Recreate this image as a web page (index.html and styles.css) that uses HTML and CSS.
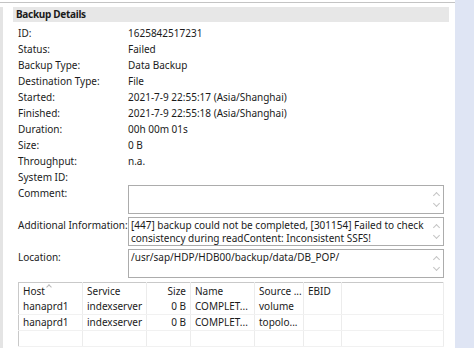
FILE: index.html
```html
<!DOCTYPE html>
<html>
<head>
    <meta name="viewport" content="width=device-width, initial-scale=1">
    <title>Backup Details</title>
    <link rel="stylesheet" href="styles.css">
</head>
<body>

    <div class="main">
        <div class="panel">
            <div class="edge"></div>
            <div class="content">
                <div class="titlebar">Backup Details</div>

                <div class="fields">
                    <div class="label">ID:</div><div class="value">1625842517231</div>
                    <div class="label">Status:</div><div class="value">Failed</div>
                    <div class="label">Backup Type:</div><div class="value">Data Backup</div>
                    <div class="label">Destination Type:</div><div class="value">File</div>
                    <div class="label">Started:</div><div class="value">2021-7-9 22:55:17 (Asia/Shanghai)</div>
                    <div class="label">Finished:</div><div class="value">2021-7-9 22:55:18 (Asia/Shanghai)</div>
                    <div class="label">Duration:</div><div class="value">00h 00m 01s</div>
                    <div class="label">Size:</div><div class="value">0 B</div>
                    <div class="label">Throughput:</div><div class="value">n.a.</div>
                    <div class="label">System ID:</div><div class="value"></div>

                    <div class="label tall">Comment:</div>
                    <div class="box">
                        <div class="boxtext"></div>
                        <div class="scroll"><span class="up"></span><span class="down"></span></div>
                    </div>

                    <div class="label tall">Additional Information:</div>
                    <div class="box">
                        <div class="boxtext">[447] backup could not be completed, [301154] Failed to check consistency during readContent: Inconsistent SSFS!</div>
                        <div class="scroll"><span class="up"></span><span class="down"></span></div>
                    </div>

                    <div class="label tall">Location:</div>
                    <div class="box">
                        <div class="boxtext">/usr/sap/HDP/HDB00/backup/data/DB_POP/</div>
                        <div class="scroll"><span class="up"></span><span class="down"></span></div>
                    </div>
                </div>

                <table class="grid">
                    <tr class="head">
                        <th class="c-host">Host<span class="sort"></span></th>
                        <th class="c-svc">Service</th>
                        <th class="c-size num">Size</th>
                        <th class="c-name">Name</th>
                        <th class="c-src">Source ...</th>
                        <th class="c-ebid">EBID</th>
                        <th></th>
                    </tr>
                    <tr>
                        <td>hanaprd1</td>
                        <td>indexserver</td>
                        <td class="num">0 B</td>
                        <td>COMPLET...</td>
                        <td>volume</td>
                        <td></td>
                        <td></td>
                    </tr>
                    <tr>
                        <td>hanaprd1</td>
                        <td>indexserver</td>
                        <td class="num">0 B</td>
                        <td>COMPLET...</td>
                        <td>topolo...</td>
                        <td></td>
                        <td></td>
                    </tr>
                    <tr><td></td><td></td><td></td><td></td><td></td><td></td><td></td></tr>
                </table>
            </div>
        </div>
    </div>
    <div class="side"></div>

</body>
</html>
```

FILE: styles.css
```css
body {
    margin: 0;
    font-family: "Noto Sans", "Open Sans", sans-serif;
    font-size: 10px;
    color: #1b1b1b;
    display: flex;
    height: 348px;
    overflow: hidden;
    background: #fff;
}

.main {
    flex: 0 0 455px;
    display: flex;
    flex-direction: column;
    margin-top: 2px;
    border-top: 1px solid #c4c4c4;
}

.side {
    flex: 1;
    background-color: #dfe5f4;
}

.panel {
    flex: 1;
    display: flex;
    margin-top: 4px;
    overflow: hidden;
}

.edge {
    width: 3px;
    background-color: #e4e4e4;
}

.content {
    flex: 1;
    padding: 0 6px 0 10px;
}

.titlebar {
    height: 15px;
    line-height: 15px;
    background-color: #e7e7e7;
    font-weight: bold;
    letter-spacing: -0.3px;
    padding-left: 3px;
}

.fields {
    display: grid;
    grid-template-columns: 110px 1fr;
    grid-auto-rows: 16px;
    margin: 3px 5px 0 5px;
    line-height: 16px;
}

.label {
    white-space: nowrap;
}

.label.tall {
    grid-row: span 2;
}

.box {
    display: flex;
    height: 29px;
    margin-bottom: 3px;
    border: 1px solid #acacac;
    box-sizing: border-box;
    grid-row: span 2;
}

.boxtext {
    flex: 1;
    padding: 1px 0 1px 2px;
    line-height: 13px;
    overflow: hidden;
}

.scroll {
    width: 13px;
    display: flex;
    flex-direction: column;
    align-items: center;
    justify-content: space-around;
    padding: 2px 0;
}

.scroll span {
    width: 4px;
    height: 4px;
    border-left: 1px solid #c4c4c4;
    border-top: 1px solid #c4c4c4;
}

.scroll .up {
    transform: rotate(45deg);
    margin-top: 3px;
}

.scroll .down {
    transform: rotate(225deg);
    margin-bottom: 3px;
}

.grid {
    margin: 1px 5px 0 5px;
    width: 426px;
    border-collapse: collapse;
    border: 1px solid #c9c9c9;
    table-layout: fixed;
}

.grid th,
.grid td {
    height: 15px;
    padding: 0 4px;
    line-height: 15px;
    text-align: left;
    font-weight: normal;
    white-space: nowrap;
    overflow: hidden;
    border-right: 1px solid #ececec;
    border-bottom: 1px solid #f1f1f1;
}

.grid .head th {
    height: 16px;
    border-bottom: none;
    position: relative;
}

.grid .num {
    text-align: right;
}

.c-host { width: 55px; }
.c-svc { width: 55px; }
.c-size { width: 35px; }
.c-name { width: 55px; }
.c-src { width: 40px; }
.c-ebid { width: 29px; }

.sort {
    position: absolute;
    left: 28px;
    top: 2px;
    width: 3px;
    height: 3px;
    border-left: 1px solid #b8b8b8;
    border-top: 1px solid #b8b8b8;
    transform: rotate(45deg);
}
```
